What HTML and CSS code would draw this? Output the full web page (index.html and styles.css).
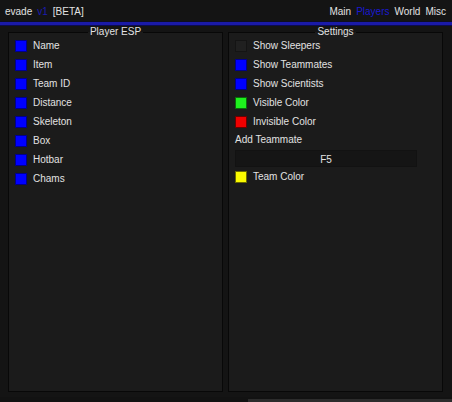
FILE: index.html
```html
<!DOCTYPE html>
<html>
<head>
<meta charset="utf-8">
<link rel="stylesheet" href="styles.css">
</head>
<body>
<div class="window">
  <header class="topbar">
    <div class="brand"><span>evade</span><span class="ver">v1</span><span>[BETA]</span></div>
    <nav class="tabs"><span>Main</span><span class="active">Players</span><span>World</span><span>Misc</span></nav>
  </header>
  <div class="accent"></div>
  <main class="panels">
    <fieldset class="panel">
      <legend>Player ESP</legend>
      <div class="row"><span class="box blue"></span>Name</div>
      <div class="row"><span class="box blue"></span>Item</div>
      <div class="row"><span class="box blue"></span>Team ID</div>
      <div class="row"><span class="box blue"></span>Distance</div>
      <div class="row"><span class="box blue"></span>Skeleton</div>
      <div class="row"><span class="box blue"></span>Box</div>
      <div class="row"><span class="box blue"></span>Hotbar</div>
      <div class="row"><span class="box blue"></span>Chams</div>
    </fieldset>
    <fieldset class="panel">
      <legend>Settings</legend>
      <div class="row"><span class="box off"></span>Show Sleepers</div>
      <div class="row"><span class="box blue"></span>Show Teammates</div>
      <div class="row"><span class="box blue"></span>Show Scientists</div>
      <div class="row"><span class="box green"></span>Visible Color</div>
      <div class="row"><span class="box red"></span>Invisible Color</div>
      <div class="label">Add Teammate</div>
      <div class="input">F5</div>
      <div class="row"><span class="box yellow"></span>Team Color</div>
    </fieldset>
  </main>
</div>
<div class="below"></div>
</body>
</html>
```

FILE: styles.css
```css
html, body {
  margin: 0;
  padding: 0;
  background: #121212;
}
body {
  width: 452px;
  height: 402px;
  overflow: hidden;
  font-family: "Liberation Sans", Arial, sans-serif;
  font-size: 10px;
  color: #e2e2e2;
}
.window {
  height: 397px;
  background: #141414;
  display: flex;
  flex-direction: column;
}
.topbar {
  height: 22px;
  display: flex;
  justify-content: space-between;
  align-items: center;
  padding: 3px 6px 0 5px;
  box-sizing: border-box;
  line-height: 12px;
  border-bottom: 1px solid #0e0e22;
}
.brand, .tabs {
  display: flex;
  gap: 5px;
}
.ver { color: #1c1cb0; }
.tabs .active { color: #1a1ad0; }
.accent {
  height: 3px;
  background: #1a1aa8;
  box-shadow: 0 1px 0 #0c0c50;
}
.panels {
  flex: 1;
  display: flex;
  gap: 5px;
  padding: 1px 9px 5px 8px;
}
.panel {
  flex: 1;
  margin: 0;
  padding: 0 6px;
  border: 1px solid #080808;
  background: #1b1b1b;
  min-width: 0;
}
.panel legend {
  margin: 0 auto -2px;
  padding: 0 2px;
  line-height: 12px;
  text-align: center;
}
.row {
  height: 19px;
  display: flex;
  align-items: center;
  gap: 6px;
}
.box {
  width: 12px;
  height: 12px;
  box-sizing: border-box;
  border: 1px solid #101010;
}
.blue { background: #0000ff; border-color: #00008a; }
.green { background: #1ef01e; border-color: #0a6a0a; }
.red { background: #f00000; border-color: #6a0000; }
.yellow { background: #fafa00; border-color: #6a6a00; }
.off { background: #202020; border-color: #141414; }
.label {
  height: 19px;
  line-height: 18px;
}
.input {
  width: 182px;
  height: 17px;
  line-height: 17px;
  box-sizing: border-box;
  background: #151515;
  border: 1px solid #121212;
  text-align: center;
}
.below {
  height: 3px;
  margin: 2px 0 0 248px;
  background: #2c2c2c;
}
```
